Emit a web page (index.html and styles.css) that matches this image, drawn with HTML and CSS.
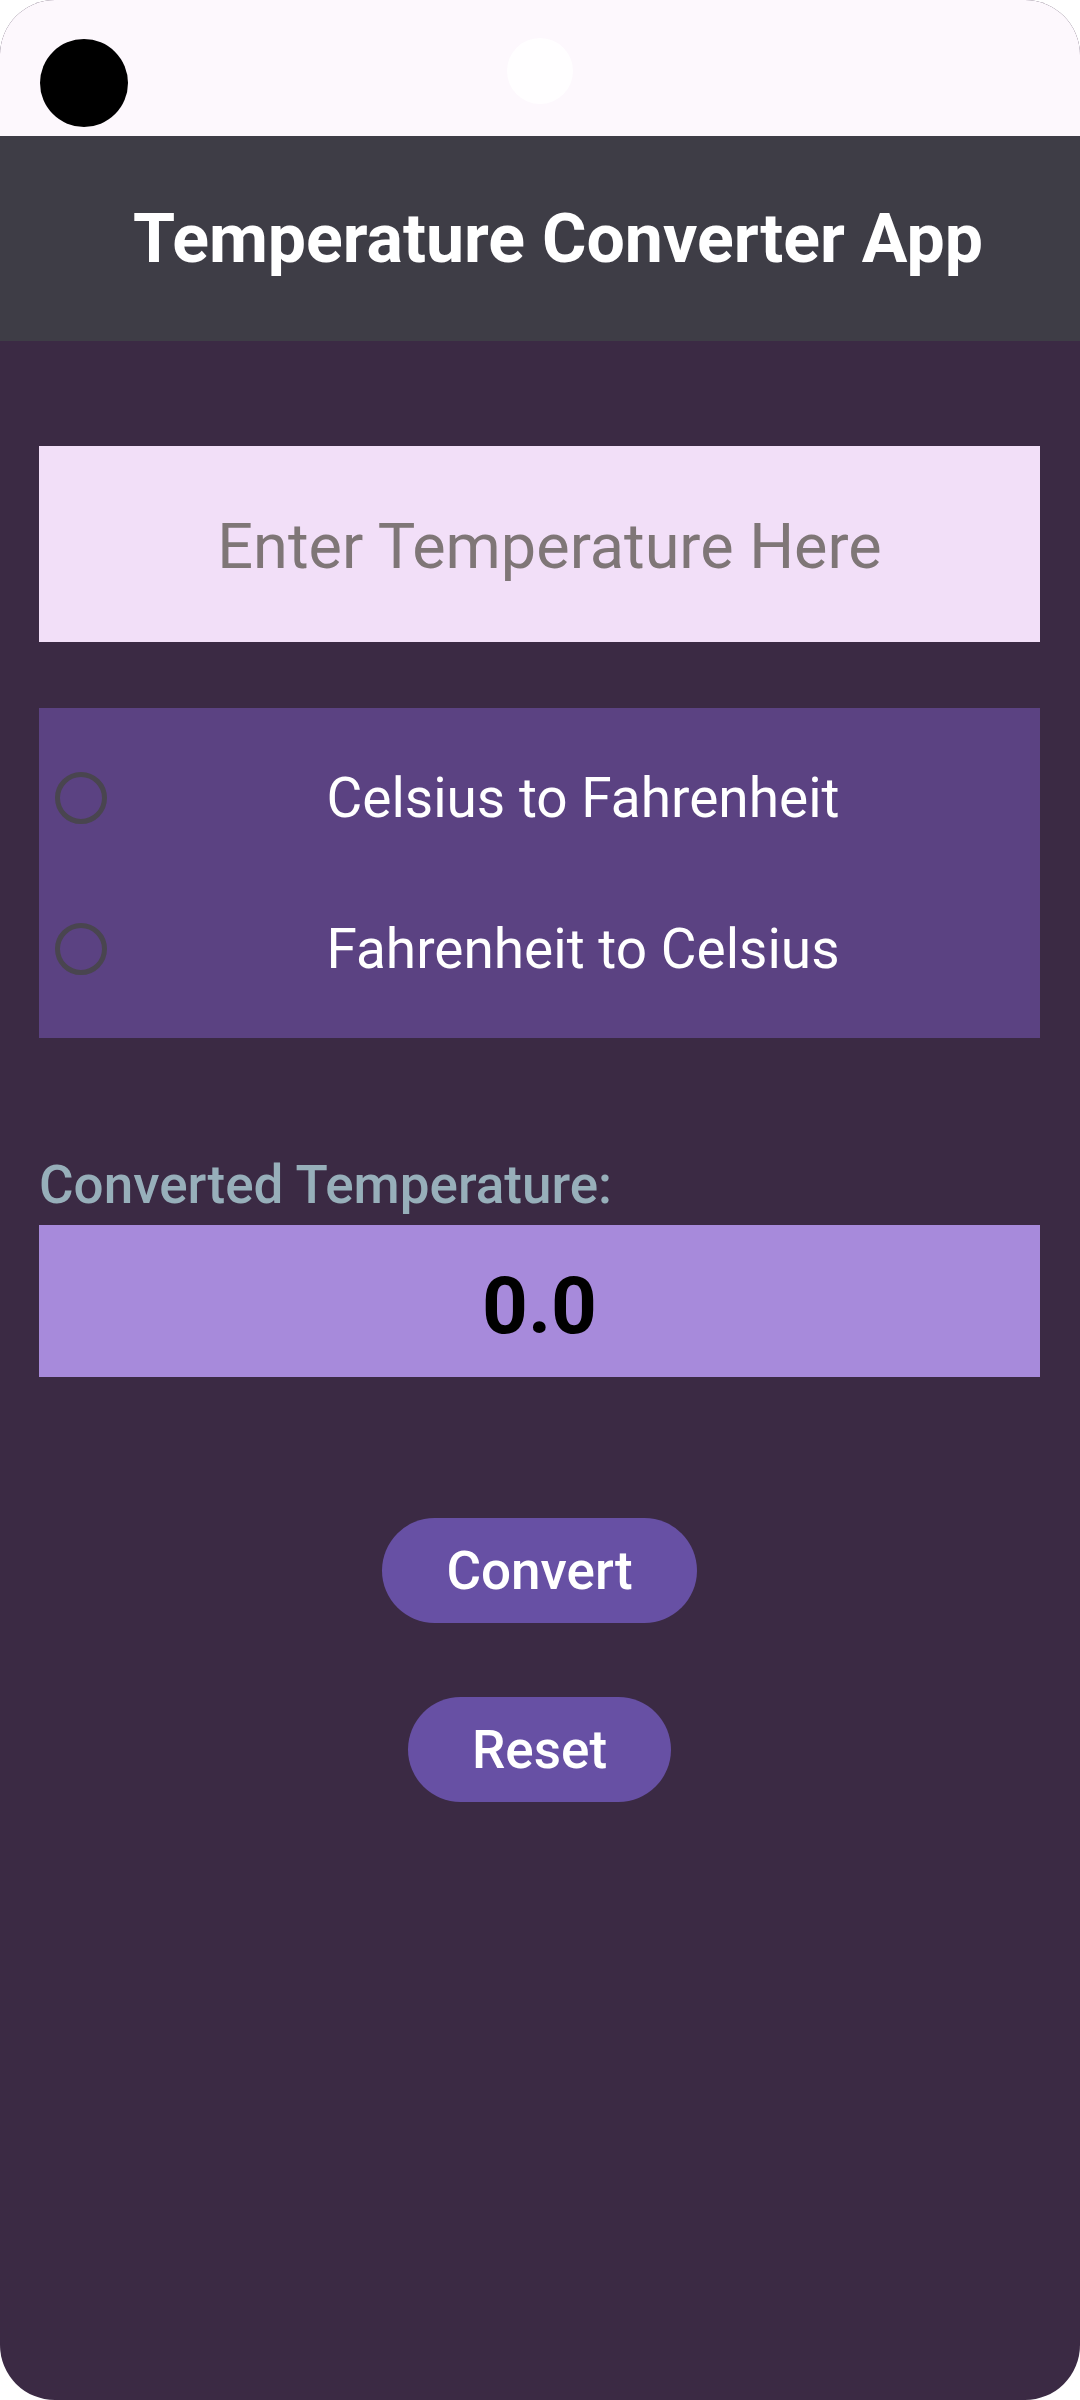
FILE: index.html
```html
<!DOCTYPE html>
<html lang="en">
<head>
    <meta charset="UTF-8">
    <meta name="viewport" content="width=device-width, initial-scale=1.0">
    <title>Temperature Converter App</title>
    <link rel="stylesheet" href="styles.css">
</head>
<body>
    <div class="phone">
        <div class="status-bar">
            <span class="camera"></span>
            <span class="sensor"></span>
        </div>
        <header class="app-bar">
            <h1>Temperature Converter App</h1>
        </header>
        <main class="content">
            <input type="text" class="temp-input" placeholder="Enter Temperature Here">

            <div class="radio-group">
                <label class="radio-row">
                    <span class="radio-dot"></span>
                    <span class="radio-text">Celsius to Fahrenheit</span>
                </label>
                <label class="radio-row">
                    <span class="radio-dot"></span>
                    <span class="radio-text">Fahrenheit to Celsius</span>
                </label>
            </div>

            <div class="result-label">Converted Temperature:</div>
            <div class="result-box">0.0</div>

            <div class="actions">
                <button class="pill-btn">Convert</button>
                <button class="pill-btn reset">Reset</button>
            </div>
        </main>
    </div>
</body>
</html>
```

FILE: styles.css
```css
/* Reset & Basic Styling */
* {
    margin: 0;
    padding: 0;
    box-sizing: border-box;
}
body {
    font-family: Roboto, 'Noto Sans', sans-serif;
    background: #fff;
    width: 1080px;
    height: 2400px;
}
.phone {
    width: 1080px;
    height: 2400px;
    border-radius: 55px;
    overflow: hidden;
    background: #3b2a44;
    display: flex;
    flex-direction: column;
}

/* status bar */
.status-bar {
    height: 136px;
    background: #fdf8fd;
    display: flex;
    align-items: flex-start;
    padding-left: 40px;
}
.camera {
    width: 88px;
    height: 88px;
    margin-top: 39px;
    border-radius: 50%;
    background: #000;
}
.sensor {
    width: 66px;
    height: 66px;
    margin-top: 38px;
    margin-left: 379px;
    border-radius: 50%;
    background: #fffeff;
}

/* toolbar */
.app-bar {
    height: 205px;
    background: #3e3d46;
    display: flex;
    align-items: center;
    justify-content: center;
    padding-left: 36px;
}
.app-bar h1 {
    font-size: 68px;
    font-weight: 700;
    color: #fff;
    line-height: 80px;
}

/* body */
.content {
    padding: 105px 40px 0 39px;
    display: flex;
    flex-direction: column;
}
.temp-input {
    height: 196px;
    width: 100%;
    border: none;
    outline: none;
    background: #f2dff8;
    font-family: Roboto, sans-serif;
    font-size: 63px;
    color: #1d1b20;
    text-align: center;
    padding: 4px 0 0 20px;
}
.temp-input::placeholder {
    color: #7f7677;
}

.radio-group {
    margin-top: 66px;
    background: #5b4282;
    padding: 14px 0;
    display: flex;
    flex-direction: column;
}
.radio-row {
    height: 151px;
    display: flex;
    align-items: center;
    padding-left: 16px;
}
.radio-dot {
    width: 52px;
    height: 52px;
    border-radius: 50%;
    border: 5px solid #49454f;
    flex-shrink: 0;
}
.radio-text {
    flex: 1;
    margin-left: 19px;
    text-align: center;
    font-size: 55px;
    color: #fff;
}

.result-label {
    margin-top: 117px;
    font-size: 53px;
    font-weight: 500;
    line-height: 60px;
    color: #97afba;
}
.result-box {
    margin-top: 10px;
    height: 152px;
    background: #a78adb;
    display: flex;
    align-items: center;
    justify-content: center;
    padding-top: 10px;
    font-size: 80px;
    font-weight: 700;
    color: #000;
}

.actions {
    margin-top: 141px;
    display: flex;
    flex-direction: column;
    align-items: center;
    gap: 74px;
}
.pill-btn {
    height: 105px;
    padding: 0 64px;
    border: none;
    border-radius: 53px;
    background: #6750a4;
    color: #fff;
    font-family: Roboto, sans-serif;
    font-size: 53px;
    font-weight: 500;
}
```
